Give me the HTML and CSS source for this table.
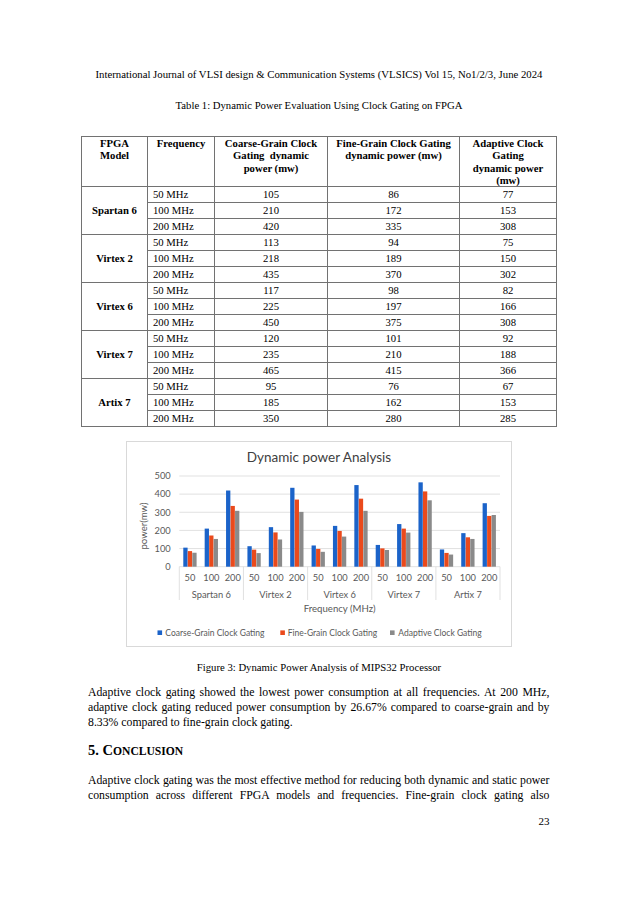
FILE: index.html
```html
<!DOCTYPE html>
<html lang="en">
<head>
<meta charset="utf-8">
<title>VLSICS page 23</title>
<link rel="stylesheet" href="styles.css">
</head>
<body>
<div class="page">
  <p class="running-head">International Journal of VLSI design &amp; Communication Systems (VLSICS) Vol 15, No1/2/3, June 2024</p>

  <p class="table-caption">Table 1: Dynamic Power Evaluation Using Clock Gating on FPGA</p>

  <table class="data">
    <colgroup>
      <col class="c1"><col class="c2"><col class="c3"><col class="c4"><col class="c5">
    </colgroup>
    <thead>
      <tr>
        <th>FPGA<br>Model</th>
        <th>Frequency</th>
        <th>Coarse-Grain Clock<br>Gating&nbsp; dynamic<br>power (mw)</th>
        <th>Fine-Grain Clock Gating<br>dynamic power (mw)</th>
        <th>Adaptive Clock<br>Gating<br>dynamic power<br>(mw)</th>
      </tr>
    </thead>
    <tbody>
      <tr><td class="model" rowspan="3">Spartan 6</td><td class="freq">50 MHz</td><td>105</td><td>86</td><td>77</td></tr>
      <tr><td class="freq">100 MHz</td><td>210</td><td>172</td><td>153</td></tr>
      <tr><td class="freq">200 MHz</td><td>420</td><td>335</td><td>308</td></tr>
      <tr><td class="model" rowspan="3">Virtex 2</td><td class="freq">50 MHz</td><td>113</td><td>94</td><td>75</td></tr>
      <tr><td class="freq">100 MHz</td><td>218</td><td>189</td><td>150</td></tr>
      <tr><td class="freq">200 MHz</td><td>435</td><td>370</td><td>302</td></tr>
      <tr><td class="model" rowspan="3">Virtex 6</td><td class="freq">50 MHz</td><td>117</td><td>98</td><td>82</td></tr>
      <tr><td class="freq">100 MHz</td><td>225</td><td>197</td><td>166</td></tr>
      <tr><td class="freq">200 MHz</td><td>450</td><td>375</td><td>308</td></tr>
      <tr><td class="model" rowspan="3">Virtex 7</td><td class="freq">50 MHz</td><td>120</td><td>101</td><td>92</td></tr>
      <tr><td class="freq">100 MHz</td><td>235</td><td>210</td><td>188</td></tr>
      <tr><td class="freq">200 MHz</td><td>465</td><td>415</td><td>366</td></tr>
      <tr><td class="model" rowspan="3">Artix 7</td><td class="freq">50 MHz</td><td>95</td><td>76</td><td>67</td></tr>
      <tr><td class="freq">100 MHz</td><td>185</td><td>162</td><td>153</td></tr>
      <tr><td class="freq">200 MHz</td><td>350</td><td>280</td><td>285</td></tr>
    </tbody>
  </table>

  <div class="chart">
    <svg class="chart-svg" width="386" height="206" viewBox="0 0 386 206" xmlns="http://www.w3.org/2000/svg">
      <rect class="frame" x="0.5" y="0.5" width="385" height="205"/>
      <text class="title" x="193" y="21.4" text-anchor="middle">Dynamic power Analysis</text>

      <g class="grid">
        <line x1="53.3" y1="35" x2="374" y2="35"/>
        <line x1="53.3" y1="53.14" x2="374" y2="53.14"/>
        <line x1="53.3" y1="71.28" x2="374" y2="71.28"/>
        <line x1="53.3" y1="89.42" x2="374" y2="89.42"/>
        <line x1="53.3" y1="107.56" x2="374" y2="107.56"/>
        <line x1="53.3" y1="125.7" x2="374" y2="125.7"/>
        <line x1="53.3" y1="125.7" x2="53.3" y2="159"/>
        <line x1="117.45" y1="125.7" x2="117.45" y2="159"/>
        <line x1="181.6" y1="125.7" x2="181.6" y2="159"/>
        <line x1="245.75" y1="125.7" x2="245.75" y2="159"/>
        <line x1="309.9" y1="125.7" x2="309.9" y2="159"/>
        <line x1="374" y1="125.7" x2="374" y2="159"/>
      </g>

      <g class="ylab" text-anchor="end">
        <text x="44.7" y="38.2">500</text>
        <text x="44.7" y="56.3">400</text>
        <text x="44.7" y="74.5">300</text>
        <text x="44.7" y="92.6">200</text>
        <text x="44.7" y="110.8">100</text>
        <text x="44.7" y="128.9">0</text>
      </g>
      <text class="axis-title" transform="translate(21 85) rotate(-90)" text-anchor="middle">power(mw)</text>

      <g transform="translate(0 125.7) scale(1 -0.1814)">
        <g transform="translate(63.99 0)"><rect class="b1" x="-6.7" y="0" width="4.3" height="105"/><rect class="b2" x="-2.2" y="0" width="4.3" height="86"/><rect class="b3" x="2.3" y="0" width="4.3" height="77"/></g>
        <g transform="translate(85.37 0)"><rect class="b1" x="-6.7" y="0" width="4.3" height="210"/><rect class="b2" x="-2.2" y="0" width="4.3" height="172"/><rect class="b3" x="2.3" y="0" width="4.3" height="153"/></g>
        <g transform="translate(106.75 0)"><rect class="b1" x="-6.7" y="0" width="4.3" height="420"/><rect class="b2" x="-2.2" y="0" width="4.3" height="335"/><rect class="b3" x="2.3" y="0" width="4.3" height="308"/></g>
        <g transform="translate(128.13 0)"><rect class="b1" x="-6.7" y="0" width="4.3" height="113"/><rect class="b2" x="-2.2" y="0" width="4.3" height="94"/><rect class="b3" x="2.3" y="0" width="4.3" height="75"/></g>
        <g transform="translate(149.51 0)"><rect class="b1" x="-6.7" y="0" width="4.3" height="218"/><rect class="b2" x="-2.2" y="0" width="4.3" height="189"/><rect class="b3" x="2.3" y="0" width="4.3" height="150"/></g>
        <g transform="translate(170.89 0)"><rect class="b1" x="-6.7" y="0" width="4.3" height="435"/><rect class="b2" x="-2.2" y="0" width="4.3" height="370"/><rect class="b3" x="2.3" y="0" width="4.3" height="302"/></g>
        <g transform="translate(192.27 0)"><rect class="b1" x="-6.7" y="0" width="4.3" height="117"/><rect class="b2" x="-2.2" y="0" width="4.3" height="98"/><rect class="b3" x="2.3" y="0" width="4.3" height="82"/></g>
        <g transform="translate(213.65 0)"><rect class="b1" x="-6.7" y="0" width="4.3" height="225"/><rect class="b2" x="-2.2" y="0" width="4.3" height="197"/><rect class="b3" x="2.3" y="0" width="4.3" height="166"/></g>
        <g transform="translate(235.03 0)"><rect class="b1" x="-6.7" y="0" width="4.3" height="450"/><rect class="b2" x="-2.2" y="0" width="4.3" height="375"/><rect class="b3" x="2.3" y="0" width="4.3" height="308"/></g>
        <g transform="translate(256.41 0)"><rect class="b1" x="-6.7" y="0" width="4.3" height="120"/><rect class="b2" x="-2.2" y="0" width="4.3" height="101"/><rect class="b3" x="2.3" y="0" width="4.3" height="92"/></g>
        <g transform="translate(277.79 0)"><rect class="b1" x="-6.7" y="0" width="4.3" height="235"/><rect class="b2" x="-2.2" y="0" width="4.3" height="210"/><rect class="b3" x="2.3" y="0" width="4.3" height="188"/></g>
        <g transform="translate(299.17 0)"><rect class="b1" x="-6.7" y="0" width="4.3" height="465"/><rect class="b2" x="-2.2" y="0" width="4.3" height="415"/><rect class="b3" x="2.3" y="0" width="4.3" height="366"/></g>
        <g transform="translate(320.55 0)"><rect class="b1" x="-6.7" y="0" width="4.3" height="95"/><rect class="b2" x="-2.2" y="0" width="4.3" height="76"/><rect class="b3" x="2.3" y="0" width="4.3" height="67"/></g>
        <g transform="translate(341.93 0)"><rect class="b1" x="-6.7" y="0" width="4.3" height="185"/><rect class="b2" x="-2.2" y="0" width="4.3" height="162"/><rect class="b3" x="2.3" y="0" width="4.3" height="153"/></g>
        <g transform="translate(363.31 0)"><rect class="b1" x="-6.7" y="0" width="4.3" height="350"/><rect class="b2" x="-2.2" y="0" width="4.3" height="280"/><rect class="b3" x="2.3" y="0" width="4.3" height="285"/></g>
      </g>

      <g class="xlab" text-anchor="middle">
        <text x="63.99" y="140.2">50</text><text x="85.37" y="140.2">100</text><text x="106.75" y="140.2">200</text>
        <text x="128.13" y="140.2">50</text><text x="149.51" y="140.2">100</text><text x="170.89" y="140.2">200</text>
        <text x="192.27" y="140.2">50</text><text x="213.65" y="140.2">100</text><text x="235.03" y="140.2">200</text>
        <text x="256.41" y="140.2">50</text><text x="277.79" y="140.2">100</text><text x="299.17" y="140.2">200</text>
        <text x="320.55" y="140.2">50</text><text x="341.93" y="140.2">100</text><text x="363.31" y="140.2">200</text>
      </g>
      <g class="xlab" text-anchor="middle">
        <text x="85.37" y="156.8">Spartan 6</text>
        <text x="149.52" y="156.8">Virtex 2</text>
        <text x="213.67" y="156.8">Virtex 6</text>
        <text x="277.82" y="156.8">Virtex 7</text>
        <text x="341.95" y="156.8">Artix 7</text>
      </g>
      <text class="axis-title" x="213.65" y="171" text-anchor="middle">Frequency (MHz)</text>

      <g class="legend">
        <rect class="b1" x="31.5" y="189.4" width="4.6" height="4.6"/>
        <text x="39.3" y="194.9">Coarse-Grain Clock Gating</text>
        <rect class="b2" x="154.3" y="189.4" width="4.6" height="4.6"/>
        <text x="161.7" y="194.9">Fine-Grain Clock Gating</text>
        <rect class="b3" x="264" y="189.4" width="4.6" height="4.6"/>
        <text x="272.3" y="194.9">Adaptive Clock Gating</text>
      </g>
    </svg>
  </div>

  <p class="fig-caption">Figure 3: Dynamic Power Analysis of MIPS32 Processor</p>

  <p class="body-text">Adaptive clock gating showed the lowest power consumption at all frequencies. At 200 MHz, adaptive clock gating reduced power consumption by 26.67% compared to coarse-grain and by 8.33% compared to fine-grain clock gating.</p>

  <h2 class="section">5. C<span class="sc">ONCLUSION</span></h2>

  <p class="body-text cont">Adaptive clock gating was the most effective method for reducing both dynamic and static power consumption across different FPGA models and frequencies. Fine-grain clock gating also</p>

  <p class="page-no">23</p>
</div>
</body>
</html>
```

FILE: styles.css
```css
html, body {
  margin: 0;
  padding: 0;
  background: #ffffff;
}

body {
  font-family: "Liberation Serif", "Times New Roman", serif;
  color: #000000;
}

.page {
  width: 638px;
  height: 903px;
  padding-top: 68px;
  box-sizing: border-box;
  display: flex;
  flex-direction: column;
}

.running-head {
  margin: 0;
  font-size: 10.75px;
  line-height: 13px;
  text-align: center;
}

.table-caption {
  margin: 17.5px 0 0;
  font-size: 10.7px;
  line-height: 13px;
  text-align: center;
}

.data {
  margin: 24.5px auto 0;
  border-collapse: collapse;
  table-layout: fixed;
  width: 475px;
  font-size: 10.7px;
}

.c1 { width: 66px; }
.c2 { width: 67px; }
.c3 { width: 113px; }
.c4 { width: 132px; }
.c5 { width: 97px; }

.data th,
.data td {
  border: 1px solid #727272;
  padding: 0;
}

.data th {
  font-weight: bold;
  line-height: 12.25px;
  height: 49px;
  vertical-align: top;
  text-align: center;
}

.data td {
  line-height: 15px;
  height: 15px;
  text-align: center;
  vertical-align: middle;
}

.data td.freq {
  text-align: left;
  padding-left: 5px;
}

.data td.model {
  font-weight: bold;
}

.chart {
  margin: 14px auto 0;
  width: 386px;
  height: 206px;
}

.chart-svg {
  display: block;
}

.chart-svg .frame {
  fill: #ffffff;
  stroke: #d9d9d9;
  stroke-width: 1;
}

.chart-svg .grid line {
  stroke: #d9d9d9;
  stroke-width: 0.8;
}

.chart-svg text {
  font-family: Lato, "Open Sans", sans-serif;
  fill: #595959;
}

.chart-svg .title {
  font-size: 13.5px;
  fill: #404040;
}

.chart-svg .ylab text,
.chart-svg .xlab text {
  font-size: 9.3px;
}

.chart-svg .axis-title {
  font-size: 9.6px;
}

.chart-svg .legend text {
  font-size: 8.5px;
}

.chart-svg .b1 { fill: #1b63c9; }
.chart-svg .b2 { fill: #ea4a1c; }
.chart-svg .b3 { fill: #8a8a8a; }

.fig-caption {
  margin: 14px 0 0;
  font-size: 10.7px;
  line-height: 13px;
  text-align: center;
}

.body-text {
  margin: 10.7px 88.5px 0 88px;
  font-size: 11.75px;
  line-height: 15.2px;
  text-align: justify;
}

.body-text.cont {
  margin-top: 12.9px;
  text-align-last: justify;
}

.section {
  margin: 11.5px 88.5px 0 88px;
  font-size: 14.5px;
  line-height: 17px;
  font-weight: bold;
}

.section .sc {
  font-size: 11.6px;
}

.page-no {
  margin: 11.7px 88.5px 0 88px;
  font-size: 11px;
  line-height: 13px;
  text-align: right;
}
```
